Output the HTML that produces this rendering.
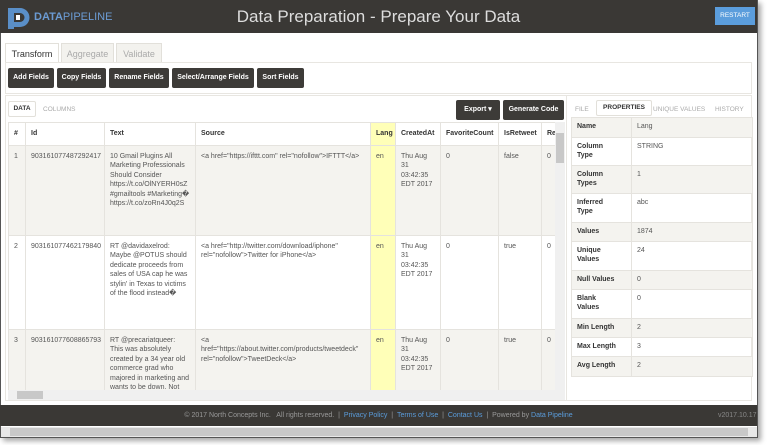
<!DOCTYPE html>
<html><head><style>
*{box-sizing:border-box;margin:0;padding:0}
body{width:768px;height:445px;background:#fff;font-family:"Liberation Sans",sans-serif;font-size:7px;color:#555;position:relative;overflow:hidden}
.a{position:absolute}
.win{left:0;top:0;width:758px;height:438px;background:#fff;border:1px solid #555;box-shadow:3px 3px 5px rgba(0,0,0,.35)}
.hdr{left:0;top:0;width:757px;height:33px;background:#3a3835}
.btn{position:absolute;top:68px;height:20px;background:#3d3b38;color:#fff;font-weight:bold;font-size:7px;line-height:20px;text-align:center;border-radius:2px}
.tab{position:absolute;top:43px;height:20px;line-height:20px;text-align:center;font-size:9px;border:1px solid #e2e0da;border-bottom:none;color:#aaa;background:#f3f2ee}
table{border-collapse:collapse}
td,th{border:1px solid #e5e3de;vertical-align:top;padding:6px 5px;text-align:left;line-height:9.5px}
th{font-weight:bold;color:#333;vertical-align:middle}
.g{background:#f4f3ef}
.y{background:#ffffb8}
.pt td{padding:4px 5px;vertical-align:top;line-height:9px}
.pt td:first-child{font-weight:bold;color:#333}
</style></head><body>
<div class="a win"></div>
<div class="a hdr"></div>
<svg class="a" style="left:8px;top:8px" width="24" height="21" viewBox="0 0 24 21"><path d="M0 0h12a9.5 9.5 0 0 1 0 19H6v2H0z" fill="#5a8fc8"/><path d="M6 5h6a4.5 4.5 0 0 1 0 9H6z" fill="#3a3835"/><rect x="8" y="7" width="4" height="5" fill="#fff"/></svg>
<div class="a" style="left:34px;top:11px;font-size:11px;color:#6b9bd3;letter-spacing:0"><b>DATA</b>PIPELINE</div>
<div class="a" style="left:0;width:757px;top:7px;text-align:center;font-size:17px;color:#ddd">Data Preparation - Prepare Your Data</div>
<div class="a" style="left:715px;top:7px;width:40px;height:18px;background:#5b9ddc;color:#fff;font-size:6.5px;line-height:18px;text-align:center">RESTART</div>
<div class="tab" style="left:5px;width:54px;background:#fff;color:#333">Transform</div>
<div class="tab" style="left:61px;width:53px">Aggregate</div>
<div class="tab" style="left:116px;width:46px">Validate</div>
<div class="a" style="left:5px;top:62px;width:747px;height:32px;border:1px solid #e8e6e1"></div>
<div class="btn" style="left:8px;width:46px">Add Fields</div>
<div class="btn" style="left:57px;width:49px">Copy Fields</div>
<div class="btn" style="left:109px;width:60px">Rename Fields</div>
<div class="btn" style="left:172px;width:82px">Select/Arrange Fields</div>
<div class="btn" style="left:257px;width:47px">Sort Fields</div>
<div class="a" style="left:5px;top:95px;width:747px;height:306px;border:1px solid #e8e6e1"></div>
<div class="a" style="left:566px;top:95px;width:1px;height:306px;background:#e8e6e1"></div>
<div class="a" style="left:8px;top:101px;width:28px;height:16px;border:1px solid #e2e0da;border-radius:2px;font-weight:bold;color:#333;line-height:14px;text-align:center;font-size:6.5px">DATA</div>
<div class="a" style="left:43px;top:106px;color:#aaa;font-size:6.5px">COLUMNS</div>
<div class="btn" style="left:456px;top:100px;width:44px">Export ▾</div>
<div class="btn" style="left:503px;top:100px;width:61px">Generate Code</div>
<div class="a" style="left:8px;top:122px;width:547px;height:268px;overflow:hidden">
<table style="width:560px;table-layout:fixed">
<colgroup><col style="width:17px"><col style="width:79px"><col style="width:91px"><col style="width:175px"><col style="width:25px"><col style="width:45px"><col style="width:58px"><col style="width:43px"><col style="width:27px"></colgroup>
<tr style="height:21px"><th>#</th><th>Id</th><th>Text</th><th>Source</th><th class="y">Lang</th><th>CreatedAt</th><th>FavoriteCount</th><th>IsRetweet</th><th>Re</th></tr>
<tr class="g" style="height:90px"><td>1</td><td>903161077487292417</td><td>10 Gmail Plugins All Marketing Professionals Should Consider https://t.co/OlNYERH0sZ #gmailtools #Marketing� https://t.co/zoRn4J0q2S</td><td>&lt;a href="https://ifttt.com" rel="nofollow"&gt;IFTTT&lt;/a&gt;</td><td class="y">en</td><td>Thu Aug 31 03:42:35 EDT 2017</td><td>0</td><td>false</td><td>0</td></tr>
<tr style="height:94px"><td>2</td><td>903161077462179840</td><td>RT @davidaxelrod: Maybe @POTUS should dedicate proceeds from sales of USA cap he was stylin' in Texas to victims of the flood instead�</td><td>&lt;a href="http://twitter.com/download/iphone" rel="nofollow"&gt;Twitter for iPhone&lt;/a&gt;</td><td class="y">en</td><td>Thu Aug 31 03:42:35 EDT 2017</td><td>0</td><td>true</td><td>0</td></tr>
<tr class="g" style="height:80px"><td>3</td><td>903161077608865793</td><td>RT @precariatqueer: This was absolutely created by a 34 year old commerce grad who majored in marketing and wants to be down. Not even�</td><td>&lt;a href="https://about.twitter.com/products/tweetdeck" rel="nofollow"&gt;TweetDeck&lt;/a&gt;</td><td class="y">en</td><td>Thu Aug 31 03:42:35 EDT 2017</td><td>0</td><td>true</td><td>0</td></tr>
</table></div>
<div class="a" style="left:555px;top:122px;width:10px;height:268px;background:#f0f0f0"></div>
<div class="a" style="left:556px;top:133px;width:8px;height:30px;background:#c8c8c8"></div>
<div class="a" style="left:8px;top:390px;width:557px;height:10px;background:#f0f0f0"></div>
<div class="a" style="left:17px;top:391px;width:26px;height:8px;background:#c8c8c8"></div>
<div class="a" style="left:575px;top:106px;color:#aaa;font-size:6.5px">FILE</div>
<div class="a" style="left:596px;top:100px;width:56px;height:16px;border:1px solid #e2e0da;border-radius:2px;font-weight:bold;color:#333;line-height:14px;text-align:center;font-size:6.5px">PROPERTIES</div>
<div class="a" style="left:653px;top:106px;color:#aaa;font-size:6.5px">UNIQUE VALUES</div>
<div class="a" style="left:715px;top:106px;color:#aaa;font-size:6.5px">HISTORY</div>
<table class="a pt" style="left:571px;top:117px;width:182px;table-layout:fixed">
<colgroup><col style="width:60px"><col></colgroup>
<tr class="g" style="height:20px"><td>Name</td><td>Lang</td></tr>
<tr style="height:28px"><td>Column<br>Type</td><td>STRING</td></tr>
<tr class="g" style="height:28px"><td>Column<br>Types</td><td>1</td></tr>
<tr style="height:29px"><td>Inferred<br>Type</td><td>abc</td></tr>
<tr class="g" style="height:19px"><td>Values</td><td>1874</td></tr>
<tr style="height:29px"><td>Unique<br>Values</td><td>24</td></tr>
<tr class="g" style="height:19px"><td>Null Values</td><td>0</td></tr>
<tr style="height:29px"><td>Blank<br>Values</td><td>0</td></tr>
<tr class="g" style="height:19px"><td>Min Length</td><td>2</td></tr>
<tr style="height:19px"><td>Max Length</td><td>3</td></tr>
<tr class="g" style="height:20px"><td>Avg Length</td><td>2</td></tr>
</table>
<div class="a" style="left:0;top:405px;width:757px;height:21px;background:#3a3835;color:#999;font-size:7px;line-height:21px;text-align:center">© 2017 North Concepts Inc. &nbsp; All rights reserved. &nbsp;| &nbsp;<span style="color:#5b9ddc">Privacy Policy</span> &nbsp;| &nbsp;<span style="color:#5b9ddc">Terms of Use</span> &nbsp;| &nbsp;<span style="color:#5b9ddc">Contact Us</span> &nbsp;| &nbsp;Powered by <span style="color:#5b9ddc">Data Pipeline</span></div>
<div class="a" style="left:718px;top:405px;line-height:21px;color:#888">v2017.10.17</div>
<div class="a" style="left:1px;top:427px;width:756px;height:10px;background:#e8e8e8"></div>
<div class="a" style="left:10px;top:428px;width:738px;height:8px;background:#c8c8c8"></div>
</body></html>
